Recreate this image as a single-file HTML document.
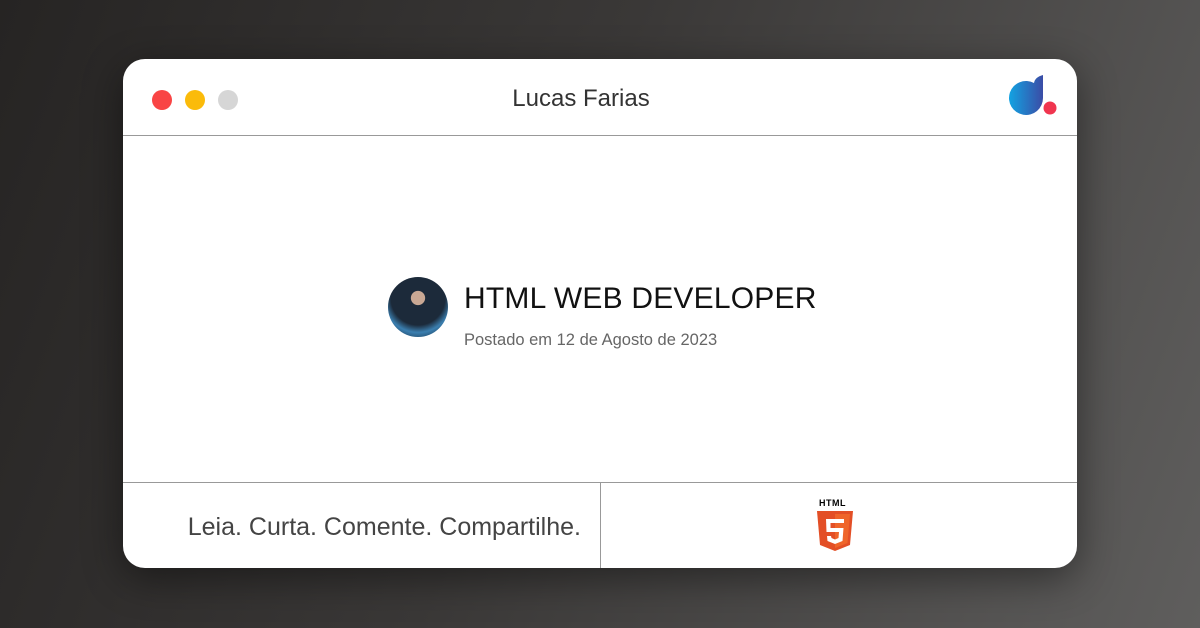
<!DOCTYPE html>
<html><head><style>
body{margin:0;width:1200px;height:628px;overflow:hidden;background:linear-gradient(110deg,#262423 0%,#3a3837 45%,#5f5e5d 100%);font-family:"Liberation Sans",sans-serif;position:relative}
.card{position:absolute;left:123px;top:59px;width:954px;height:509px;background:#fff;border-radius:22px;box-shadow:0 10px 40px rgba(0,0,0,.45);overflow:hidden}
.dot{position:absolute;top:31px;width:20px;height:20px;border-radius:50%}
.title{position:absolute;top:26px;left:0;width:916px;text-align:center;font-size:24px;color:#333}
.hl{position:absolute;left:0;right:0;height:1px;background:#999}
</style></head><body>
<div class="card">
<div class="dot" style="left:29px;background:#f94545"></div>
<div class="dot" style="left:62px;background:#fbbb0a"></div>
<div class="dot" style="left:95px;background:#d6d6d6"></div>
<div class="title">Lucas Farias</div>
<svg style="position:absolute;left:877px;top:16px" width="60" height="44" viewBox="0 0 60 44">
<defs><linearGradient id="g" x1="0" x2="1"><stop offset="0" stop-color="#12a3e2"/><stop offset="1" stop-color="#3b4ca6"/></linearGradient></defs>
<path d="M43 23 A17 17 0 1 1 34 8 Q35 2 43 0 Z" fill="url(#g)"/>
<circle cx="50" cy="33" r="6.5" fill="#f0354f"/></svg>
<div class="hl" style="top:76px"></div>
<div style="position:absolute;left:265px;top:218px;width:60px;height:60px;border-radius:50%;background:radial-gradient(circle at 50% 35%,#c9a894 0 14%,#1c2a3a 15% 55%,#3b7fb0 70%,#0b1a2a 100%)"></div>
<div style="position:absolute;left:341px;top:223px;font-size:30px;letter-spacing:0.2px;color:#111">HTML WEB DEVELOPER</div>
<div style="position:absolute;left:341px;top:272px;font-size:16.5px;color:#666">Postado em 12 de Agosto de 2023</div>
<div class="hl" style="top:423px"></div>
<div style="position:absolute;left:477px;top:423px;width:1px;height:86px;background:#999"></div>
<div style="position:absolute;left:0;width:458px;top:454px;text-align:right;font-size:25px;color:#444">Leia. Curta. Comente. Compartilhe.</div>
<div style="position:absolute;left:696px;top:439px;font-size:9px;font-weight:bold;letter-spacing:.5px;color:#000">HTML</div>
<svg style="position:absolute;left:694px;top:452px" width="36" height="40" viewBox="0 0 36 40">
<path d="M0 0H36L33 34L18 40L3 34Z" fill="#e34f26"/><path d="M18 3H33L30.5 32L18 37Z" fill="#ef652a"/>
<path d="M9 8H27V12H13.5V17H26.5L25.5 30L18 33L10.5 30L10 25H14L14.5 27L18 28.5L21.5 27L22 21H9.5Z" fill="#fff"/></svg>
</div>
</body></html>
